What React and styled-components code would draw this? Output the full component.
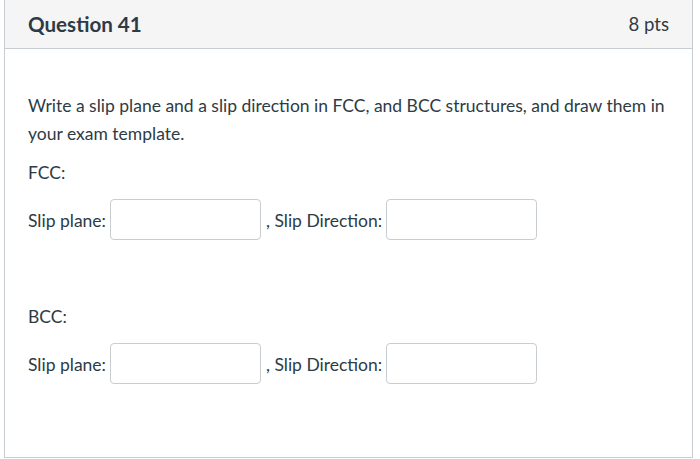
import React from "react";
import styled, { createGlobalStyle } from "styled-components";

const GlobalStyle = createGlobalStyle`
  body {
    margin: 0;
    background: #fff;
    font-family: Lato, "Liberation Sans", sans-serif;
    color: #2d3b45;
  }
`;

const Card = styled.div`
  margin-left: 4px;
  width: 687px;
  height: 457px;
  border: 1px solid #c7cdd1;
  border-top: none;
  box-sizing: content-box;
`;

const Header = styled.div`
  height: 48px;
  padding: 0 23px;
  display: flex;
  align-items: center;
  justify-content: space-between;
  background: #f5f5f5;
  border-bottom: 1px solid #c7cdd1;
`;

const Title = styled.h2`
  margin: 0;
  font-size: 20.6px;
  font-weight: 700;
`;

const Points = styled.div`
  font-size: 18.6px;
  font-weight: 400;
`;

const Body = styled.div`
  padding: 43px 23px 0;
  font-size: 17.5px;
  line-height: 28px;
`;

const Para = styled.p`
  margin: 0 0 ${(p) => p.$after || 11}px;
`;

const Row = styled.div`
  display: flex;
  align-items: center;
  height: 42px;
  margin-bottom: ${(p) => p.$after || 0}px;
`;

const Label = styled.span`
  padding-top: 4px;
`;

const Blank = styled.input`
  width: 151px;
  height: 41px;
  margin: 0 5px 0 4px;
  border: 1px solid #c7cdd1;
  border-radius: 4px;
  background: #fff;
  box-sizing: border-box;
  outline: none;
`;

function SlipRow({ after }) {
  return (
    <Row $after={after}>
      <Label>Slip plane:</Label>
      <Blank />
      <Label>, Slip Direction:</Label>
      <Blank />
    </Row>
  );
}

export default function App() {
  return (
    <>
      <GlobalStyle />
      <Card>
        <Header>
          <Title>Question 41</Title>
          <Points>8 pts</Points>
        </Header>
        <Body>
          <Para>
            Write a slip plane and a slip direction in FCC, and BCC structures, and draw them in
            your exam template.
          </Para>
          <Para>FCC:</Para>
          <SlipRow after={63} />
          <Para>BCC:</Para>
          <SlipRow />
        </Body>
      </Card>
    </>
  );
}
